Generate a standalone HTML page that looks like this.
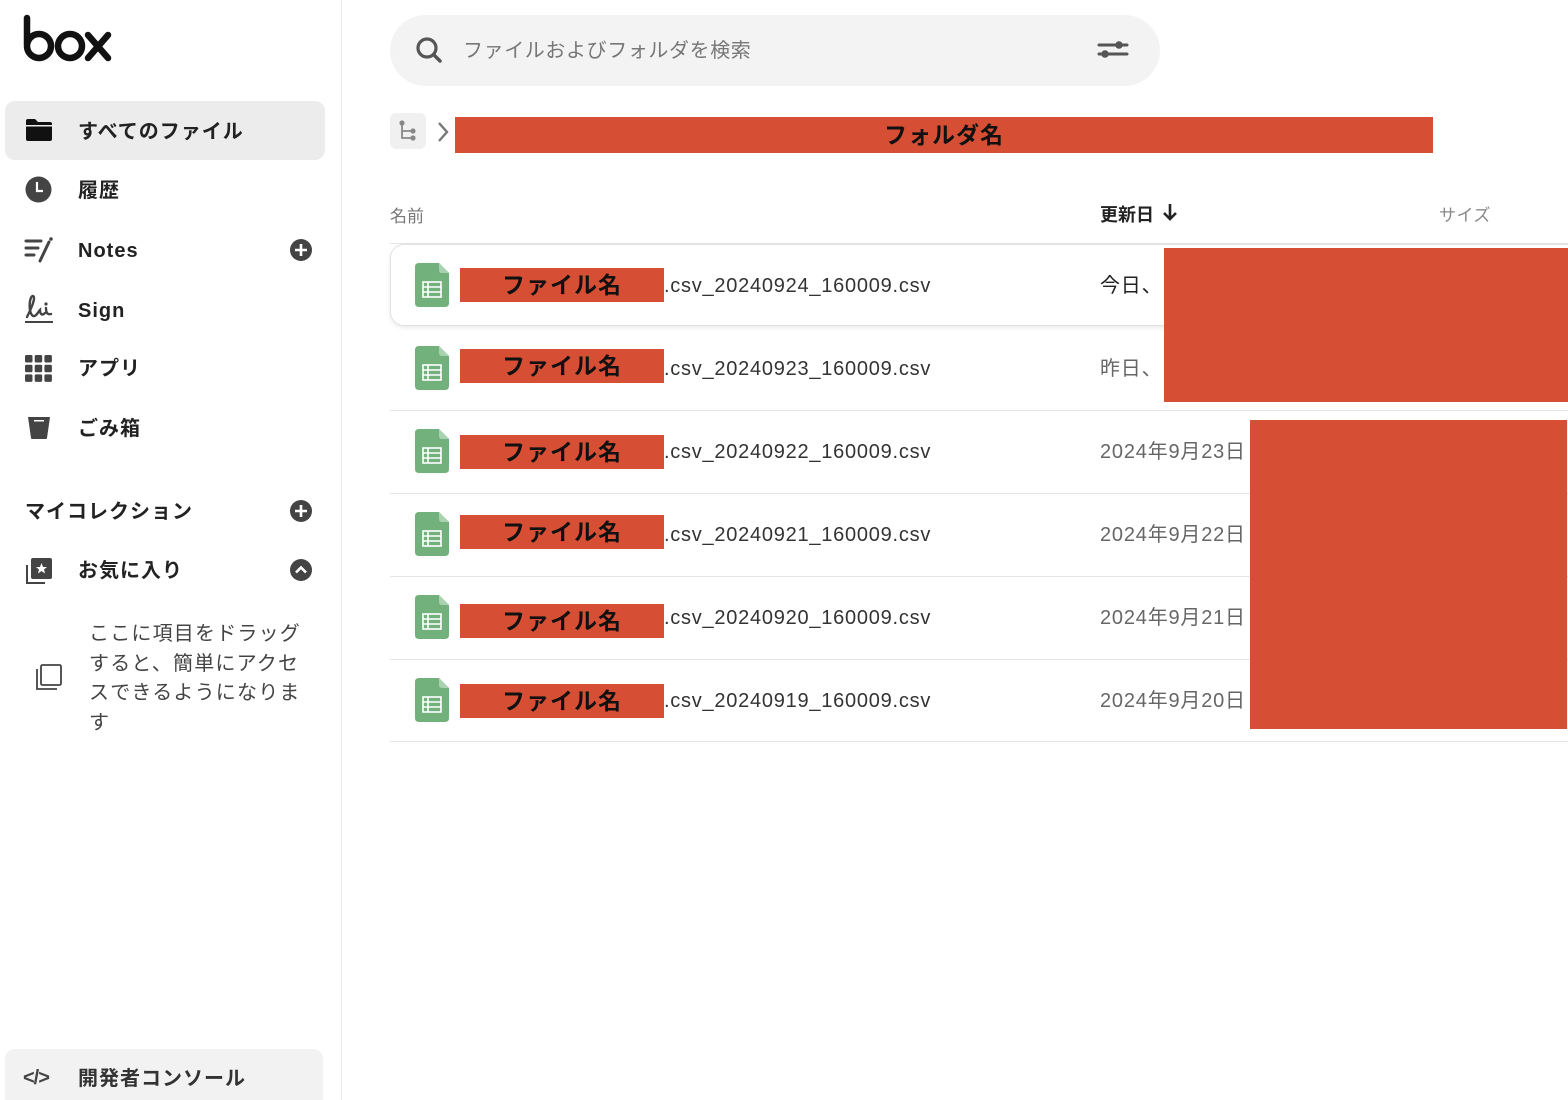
<!DOCTYPE html>
<html><head><meta charset="utf-8">
<style>
*{margin:0;padding:0;box-sizing:border-box}
html,body{width:1568px;height:1100px;overflow:hidden}
body{background:#fff;font-family:"Liberation Sans","Noto Sans CJK JP",sans-serif;color:#222;position:relative}
.a{position:absolute}
.nav{position:absolute;left:78px;font-size:20px;font-weight:bold;color:#222;line-height:24px;letter-spacing:1px}
.ico{position:absolute}
.red{position:absolute;background:#d64f35}
.fn{position:absolute;left:460px;width:204px;height:34px;background:#d64f35;color:#111;font-weight:bold;font-size:23px;text-align:center;line-height:34px;letter-spacing:1px}
.csv{position:absolute;left:664px;font-size:20px;color:#333;line-height:24px;letter-spacing:0.75px}
.date{position:absolute;left:1100px;font-size:20px;color:#666;line-height:24px;letter-spacing:0.8px}
.sep{position:absolute;left:390px;right:0;height:1px;background:#e4e4e4}
</style></head><body>

<svg class="ico" style="left:22px;top:14px" width="92" height="50" viewBox="0 0 92 50">
<g fill="none" stroke="#111" stroke-width="6.5" stroke-linecap="round" stroke-linejoin="round">
<path d="M5 4 V30"/><circle cx="17" cy="32" r="12"/><circle cx="48" cy="32" r="12"/><path d="M66 21 L86 44 M86 21 L66 44"/></g></svg>
<div class="a" style="left:341px;top:0;width:1px;height:1100px;background:#ececec"></div>

<div class="a" style="left:5px;top:101px;width:320px;height:59px;background:#ececec;border-radius:10px"></div>
<svg class="ico" style="left:25px;top:119px" width="28" height="22" viewBox="0 0 28 22"><path d="M1 2 Q1 0 3 0 H10 L13 3 H25 Q27 3 27 5 V20 Q27 22 25 22 H3 Q1 22 1 20Z" fill="#111"/><rect x="1" y="6" width="26" height="1.5" fill="#ececec"/></svg>
<div class="nav" style="top:120px">すべてのファイル</div>

<svg class="ico" style="left:25px;top:176px" width="27" height="27" viewBox="0 0 27 27"><circle cx="13.5" cy="13.5" r="13" fill="#444"/><path d="M12 6 V15 H18" fill="none" stroke="#fff" stroke-width="2.2"/></svg>
<div class="nav" style="top:179px">履歴</div>

<svg class="ico" style="left:24px;top:237px" width="30" height="26" viewBox="0 0 30 26"><g stroke="#444" stroke-width="3" stroke-linecap="round"><path d="M2 4 H17 M2 11 H14 M2 18 H10 M25 5 L16 24"/></g><circle cx="27" cy="2" r="1.8" fill="#444"/></svg>
<div class="nav" style="top:239px">Notes</div>
<svg class="ico" style="left:290px;top:239px" width="22" height="22" viewBox="0 0 22 22"><circle cx="11" cy="11" r="11" fill="#444"/><path d="M11 5 V17 M5 11 H17" stroke="#fff" stroke-width="2.6"/></svg>

<svg class="ico" style="left:24px;top:293px" width="30" height="32" viewBox="0 0 30 32"><path d="M3 24 C8 14 12 4 9 3 C5 3 4 20 9 23 C12 24 14 19 16 17 C16 21 18 23 21 20 M22 15 C22 19 23 22 27 21" fill="none" stroke="#444" stroke-width="2.4" stroke-linecap="round"/><circle cx="22" cy="11" r="1.6" fill="#444"/><path d="M1 29 H29" stroke="#444" stroke-width="2"/></svg>
<div class="nav" style="top:299px">Sign</div>

<svg class="ico" style="left:25px;top:355px" width="27" height="27" viewBox="0 0 27 27"><g fill="#444"><rect x="0" y="0" width="7.5" height="7.5" rx="1.5"/><rect x="9.7" y="0" width="7.5" height="7.5" rx="1.5"/><rect x="19.4" y="0" width="7.5" height="7.5" rx="1.5"/><rect x="0" y="9.7" width="7.5" height="7.5" rx="1.5"/><rect x="9.7" y="9.7" width="7.5" height="7.5" rx="1.5"/><rect x="19.4" y="9.7" width="7.5" height="7.5" rx="1.5"/><rect x="0" y="19.4" width="7.5" height="7.5" rx="1.5"/><rect x="9.7" y="19.4" width="7.5" height="7.5" rx="1.5"/><rect x="19.4" y="19.4" width="7.5" height="7.5" rx="1.5"/></g></svg>
<div class="nav" style="top:357px">アプリ</div>

<svg class="ico" style="left:27px;top:416px" width="24" height="24" viewBox="0 0 24 24"><path d="M1 1 H23 L20 22 Q20 23 19 23 H5 Q4 23 4 22Z" fill="#444"/><rect x="7" y="4" width="10" height="1.5" fill="#fff"/></svg>
<div class="nav" style="top:417px">ごみ箱</div>

<div class="nav" style="left:25px;top:500px">マイコレクション</div>
<svg class="ico" style="left:290px;top:500px" width="22" height="22" viewBox="0 0 22 22"><circle cx="11" cy="11" r="11" fill="#444"/><path d="M11 5 V17 M5 11 H17" stroke="#fff" stroke-width="2.6"/></svg>

<svg class="ico" style="left:25px;top:557px" width="28" height="28" viewBox="0 0 28 28"><path d="M2 8 V26 H20" fill="none" stroke="#444" stroke-width="2"/><rect x="6" y="1" width="21" height="21" rx="2" fill="#444"/><path d="M16.5 6 L18 10 L22 10 L19 12.5 L20 16.5 L16.5 14 L13 16.5 L14 12.5 L11 10 L15 10Z" fill="#fff"/></svg>
<div class="nav" style="top:559px">お気に入り</div>
<svg class="ico" style="left:290px;top:559px" width="22" height="22" viewBox="0 0 22 22"><circle cx="11" cy="11" r="11" fill="#444"/><path d="M6 13.5 L11 8.5 L16 13.5" fill="none" stroke="#fff" stroke-width="2.6"/></svg>

<svg class="ico" style="left:35px;top:663px" width="28" height="28" viewBox="0 0 28 28"><path d="M2 6 V26 H22" fill="none" stroke="#444" stroke-width="1.8"/><rect x="6" y="2" width="20" height="20" rx="1.5" fill="none" stroke="#444" stroke-width="1.8"/></svg>
<div class="a" style="left:89px;top:620px;width:220px;font-size:20px;line-height:29.5px;color:#444;letter-spacing:1.2px">ここに項目をドラッグすると、簡単にアクセスできるようになります</div>

<div class="a" style="left:5px;top:1049px;width:318px;height:51px;background:#f2f2f2;border-radius:10px 10px 0 0"></div>
<div class="a" style="left:23px;top:1067px;font-size:20px;font-weight:bold;color:#444;letter-spacing:-1px">&lt;/&gt;</div>
<div class="nav" style="top:1067px;color:#333">開発者コンソール</div>

<div class="a" style="left:390px;top:15px;width:770px;height:71px;background:#f3f3f3;border-radius:36px"></div>
<svg class="ico" style="left:415px;top:36px" width="28" height="28" viewBox="0 0 28 28"><circle cx="12" cy="12" r="9" fill="none" stroke="#555" stroke-width="3.2"/><path d="M19 19 L25 25" stroke="#555" stroke-width="3.5" stroke-linecap="round"/></svg>
<div class="a" style="left:463px;top:39px;font-size:20px;color:#777;line-height:24px;letter-spacing:0.6px">ファイルおよびフォルダを検索</div>
<svg class="ico" style="left:1097px;top:40px" width="32" height="20" viewBox="0 0 32 20"><g stroke="#555" stroke-width="3" stroke-linecap="round"><path d="M2 5 H18 M26 5 H30 M2 14 H4 M12 14 H30"/></g><circle cx="22" cy="5" r="3.8" fill="#555"/><circle cx="8" cy="14" r="3.8" fill="#555"/></svg>

<div class="a" style="left:390px;top:113px;width:36px;height:36px;background:#f0f0f0;border-radius:6px"></div>
<svg class="ico" style="left:398px;top:120px" width="20" height="22" viewBox="0 0 20 22"><g fill="#888"><circle cx="4" cy="3" r="2.6"/><circle cx="15" cy="11" r="2.6"/><circle cx="15" cy="18" r="2.6"/></g><path d="M4 3 V18 H15 M4 11 H15" fill="none" stroke="#888" stroke-width="1.8"/></svg>
<svg class="ico" style="left:436px;top:121px" width="14" height="22" viewBox="0 0 14 22"><path d="M3 2 L11 11 L3 20" fill="none" stroke="#777" stroke-width="2.4"/></svg>
<div class="red" style="left:455px;top:117px;width:978px;height:36px;color:#111;font-weight:bold;font-size:23px;text-align:center;line-height:36px;letter-spacing:1px">フォルダ名</div>

<div class="a" style="left:390px;top:202px;font-size:17px;color:#777">名前</div>
<div class="a" style="left:1100px;top:201px;font-size:18px;font-weight:bold;color:#222">更新日</div>
<svg class="ico" style="left:1161px;top:203px" width="18" height="18" viewBox="0 0 18 18"><path d="M9 1 V16 M3 10 L9 16 L15 10" fill="none" stroke="#222" stroke-width="2.6"/></svg>
<div class="a" style="left:1439px;top:201px;font-size:17px;color:#888;letter-spacing:0.5px">サイズ</div>
<div class="sep" style="top:243px"></div>

<div class="a" style="left:390px;top:244px;width:1200px;height:82px;border:1px solid #e2e2e2;border-radius:14px;box-shadow:0 2px 4px rgba(0,0,0,0.08);background:#fff"></div>

<div class="sep" style="top:410px"></div>
<div class="sep" style="top:493px"></div>
<div class="sep" style="top:576px"></div>
<div class="sep" style="top:659px"></div>
<div class="sep" style="top:741px"></div>

<svg width="0" height="0" style="position:absolute"><defs><g id="sh"><path d="M4 0 H24 L34 10 V40 Q34 44 30 44 H4 Q0 44 0 40 V4 Q0 0 4 0Z" fill="#72b07c"/><path d="M24 0 L34 10 H27 Q24 10 24 7Z" fill="#a9d3b0"/><g fill="none" stroke="#fff" stroke-width="1.6"><rect x="8" y="19" width="18" height="15"/><path d="M8 24 H26 M8 29 H26 M13 19 V34"/></g></g></defs></svg>
<svg class="ico" style="left:415px;top:263px" width="34" height="44"><use href="#sh"/></svg>
<svg class="ico" style="left:415px;top:346px" width="34" height="44"><use href="#sh"/></svg>
<svg class="ico" style="left:415px;top:429px" width="34" height="44"><use href="#sh"/></svg>
<svg class="ico" style="left:415px;top:512px" width="34" height="44"><use href="#sh"/></svg>
<svg class="ico" style="left:415px;top:595px" width="34" height="44"><use href="#sh"/></svg>
<svg class="ico" style="left:415px;top:678px" width="34" height="44"><use href="#sh"/></svg>

<div class="fn" style="top:268px">ファイル名</div><div class="csv" style="top:274px">.csv_20240924_160009.csv</div>
<div class="fn" style="top:349px">ファイル名</div><div class="csv" style="top:357px">.csv_20240923_160009.csv</div>
<div class="fn" style="top:435px">ファイル名</div><div class="csv" style="top:440px">.csv_20240922_160009.csv</div>
<div class="fn" style="top:515px">ファイル名</div><div class="csv" style="top:523px">.csv_20240921_160009.csv</div>
<div class="fn" style="top:604px">ファイル名</div><div class="csv" style="top:606px">.csv_20240920_160009.csv</div>
<div class="fn" style="top:684px">ファイル名</div><div class="csv" style="top:689px">.csv_20240919_160009.csv</div>

<div class="date" style="top:274px;color:#222">今日、</div>
<div class="date" style="top:357px">昨日、</div>
<div class="date" style="top:440px">2024年9月23日</div>
<div class="date" style="top:523px">2024年9月22日</div>
<div class="date" style="top:606px">2024年9月21日</div>
<div class="date" style="top:689px">2024年9月20日</div>

<div class="red" style="left:1164px;top:248px;width:404px;height:154px"></div>
<div class="red" style="left:1250px;top:420px;width:317px;height:309px"></div>
</body></html>
